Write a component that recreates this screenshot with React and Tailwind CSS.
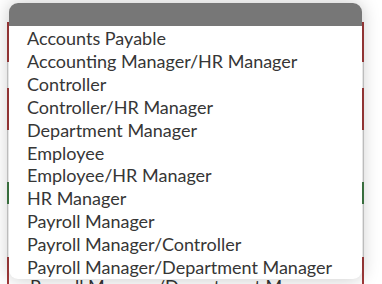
import React from "react";

const items = [
  "Accounts Payable",
  "Accounting Manager/HR Manager",
  "Controller",
  "Controller/HR Manager",
  "Department Manager",
  "Employee",
  "Employee/HR Manager",
  "HR Manager",
  "Payroll Manager",
  "Payroll Manager/Controller",
  "Payroll Manager/Department Manager",
];

export default function App() {
  return (
    <div
      className="relative w-[382px] h-[284px] overflow-hidden bg-white"
      style={{ fontFamily: "Lato, 'Open Sans', sans-serif" }}
    >
      {/* underlying form */}
      <div className="flex flex-col pl-[7px] w-[364px] pt-[22px]">
        <div className="h-[40px] border-x-2 border-[#a03a3a]" />
        <div className="h-[26px] border-x border-[#d0d0d0]" />
        <div className="h-[42px] border-x-2 border-[#a03a3a]" />
        <div className="h-[52px] border-x border-[#d0d0d0]" />
        <div className="h-[22px] border-x-2 border-[#3f7a45]" />
        <div className="h-[53px] border-x border-[#d0d0d0]" />
        <div className="h-[40px] border-x-2 border-[#a03a3a] pl-[21px] pt-[18px] text-[18px] text-[#333] leading-[22px] whitespace-nowrap">
          Payroll Manager/Department Manager
        </div>
      </div>

      {/* dropdown overlay */}
      <div className="absolute left-[9px] top-[3px] w-[353px] h-[276px] rounded-[9px] bg-white overflow-hidden shadow-[0_0_18px_rgba(0,0,0,0.22)]">
        <div className="h-[23px] bg-[#777777]" />
        <ul className="flex flex-col pt-[1px]">
          {items.map((t) => (
            <li
              key={t}
              className="pl-[18px] text-[18px] leading-[22.9px] text-[#363636] whitespace-nowrap"
            >
              {t}
            </li>
          ))}
        </ul>
      </div>
    </div>
  );
}
